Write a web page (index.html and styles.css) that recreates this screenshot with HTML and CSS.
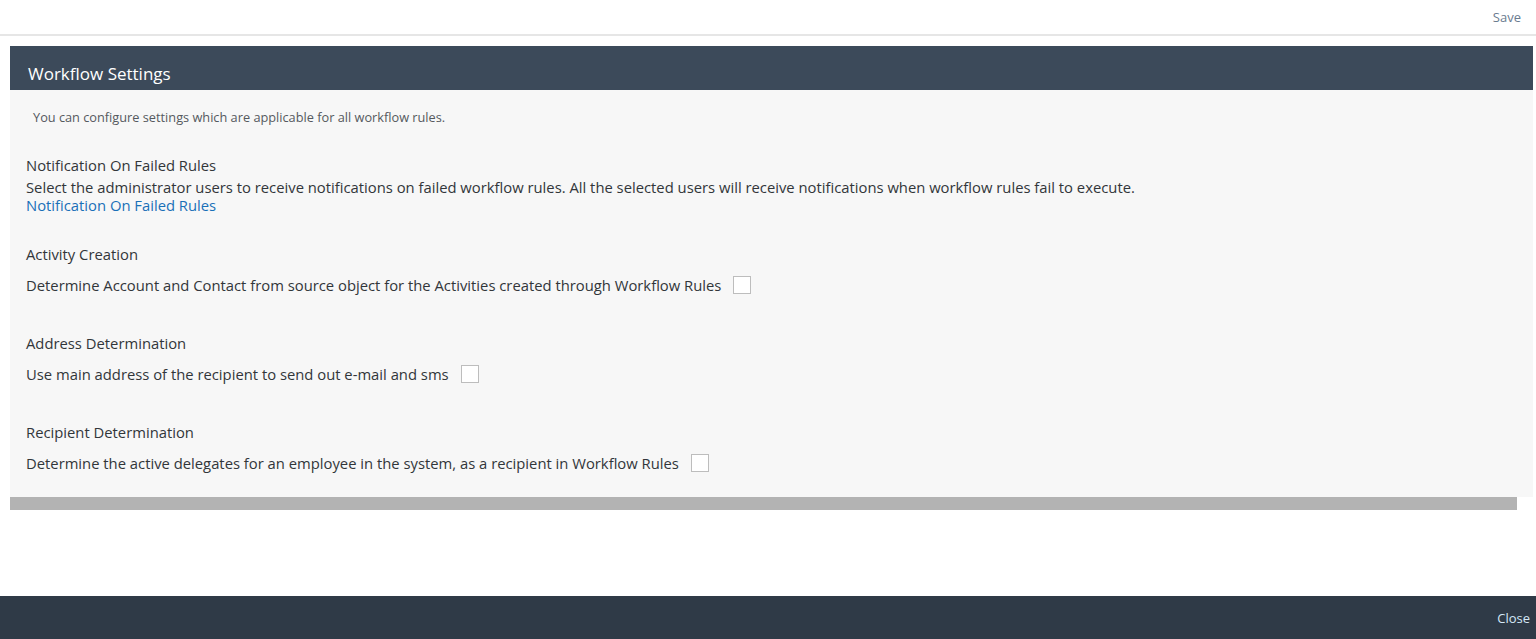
FILE: index.html
```html
<!DOCTYPE html>
<html lang="en">
<head>
<meta charset="utf-8">
<title>Workflow Settings</title>
<link rel="stylesheet" href="styles.css">
</head>
<body>
<div class="topbar">
  <button class="btn-save" type="button">Save</button>
</div>
<div class="page">
  <div class="panel">
    <div class="panel-header"><h1 class="panel-title">Workflow Settings</h1></div>
    <div class="panel-body">
      <p class="intro">You can configure settings which are applicable for all workflow rules.</p>

      <div class="section section-first">
        <div class="sec-title">Notification On Failed Rules</div>
        <div class="sec-desc">Select the administrator users to receive notifications on failed workflow rules. All the selected users will receive notifications when workflow rules fail to execute.</div>
        <a class="sec-link" href="#">Notification On Failed Rules</a>
      </div>

      <div class="section">
        <div class="sec-title">Activity Creation</div>
        <label class="check-row"><span>Determine Account and Contact from source object for the Activities created through Workflow Rules</span><span class="checkbox"></span></label>
      </div>

      <div class="section section-gap">
        <div class="sec-title">Address Determination</div>
        <label class="check-row"><span>Use main address of the recipient to send out e-mail and sms</span><span class="checkbox"></span></label>
      </div>

      <div class="section section-gap">
        <div class="sec-title">Recipient Determination</div>
        <label class="check-row"><span>Determine the active delegates for an employee in the system, as a recipient in Workflow Rules</span><span class="checkbox"></span></label>
      </div>
    </div>
    <div class="hscroll"><div class="hscroll-thumb"></div></div>
  </div>
</div>
<div class="footer">
  <button class="btn-close" type="button">Close</button>
</div>
</body>
</html>
```

FILE: styles.css
```css
html, body {
  margin: 0;
  padding: 0;
  background: #ffffff;
  font-family: "Open Sans", "Noto Sans", "Liberation Sans", sans-serif;
  color: #32363a;
}

.topbar {
  height: 34px;
  border-bottom: 2px solid #e6e6e6;
  display: flex;
  justify-content: flex-end;
  align-items: center;
  padding-right: 15px;
}

.btn-save {
  background: none;
  border: none;
  padding: 0;
  font-family: inherit;
  font-size: 13px;
  color: #6a7b8f;
  cursor: pointer;
}

.page {
  padding: 10px 3px 0 10px;
}

.panel {
  display: flex;
  flex-direction: column;
}

.panel-header {
  height: 44px;
  background: #3c4a5a;
  display: flex;
  align-items: flex-end;
  padding-left: 18px;
  box-sizing: border-box;
  padding-bottom: 5px;
}

.panel-title {
  margin: 0;
  font-size: 17px;
  font-weight: normal;
  color: #ffffff;
  line-height: 22px;
}

.panel-body {
  background: #f7f7f7;
  padding: 19px 16px 25px 16px;
}

.intro {
  margin: 0 0 0 7px;
  font-size: 12.75px;
  line-height: 16px;
  color: #55595e;
}

.section {
  margin-top: 40px;
}

.section-first {
  margin-top: 31px;
}

.section-first + .section {
  margin-top: 31px;
}

.sec-title {
  font-size: 14.8px;
  line-height: 18px;
  color: #32363a;
}

.sec-desc {
  margin-top: 4px;
  font-size: 14.8px;
  line-height: 18px;
  color: #32363a;
}

.sec-link {
  display: block;
  font-size: 14.8px;
  line-height: 18px;
  color: #1a70b8;
  text-decoration: none;
}

.check-row {
  margin-top: 13px;
  display: flex;
  align-items: center;
  gap: 12px;
  font-size: 14.8px;
  line-height: 18px;
  color: #32363a;
}

.checkbox {
  width: 16px;
  height: 16px;
  border: 1px solid #bdbdbd;
  background: #ffffff;
  flex: none;
}

.hscroll {
  height: 13px;
  display: flex;
}

.hscroll-thumb {
  flex: 1;
  margin-right: 16px;
  background: #b3b3b3;
}

.footer {
  position: fixed;
  left: 0;
  right: 0;
  bottom: 0;
  height: 43px;
  background: #2f3a47;
  display: flex;
  justify-content: flex-end;
  align-items: center;
  padding-right: 6px;
}

.btn-close {
  background: none;
  border: none;
  padding: 0;
  font-family: inherit;
  font-size: 13px;
  color: #d4e8f7;
  cursor: pointer;
}
```
